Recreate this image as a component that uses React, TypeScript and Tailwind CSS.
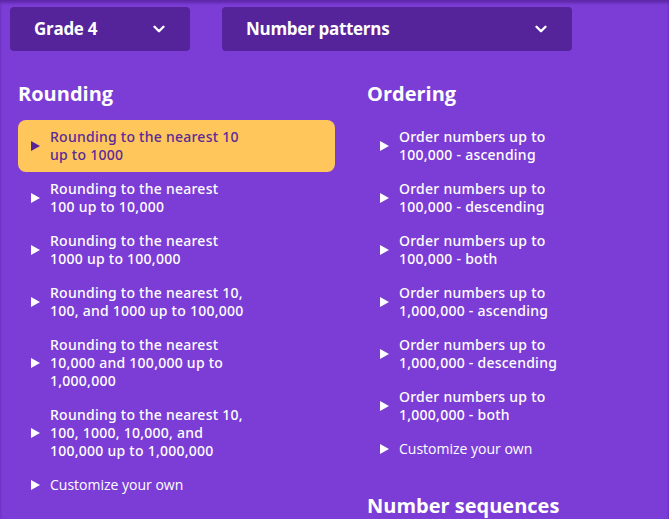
import { ChevronDown } from "lucide-react";

const rounding = [
  ["Rounding to the nearest 10", "up to 1000"],
  ["Rounding to the nearest", "100 up to 10,000"],
  ["Rounding to the nearest", "1000 up to 100,000"],
  ["Rounding to the nearest 10,", "100, and 1000 up to 100,000"],
  ["Rounding to the nearest", "10,000 and 100,000 up to", "1,000,000"],
  ["Rounding to the nearest 10,", "100, 1000, 10,000, and", "100,000 up to 1,000,000"],
];

const ordering = [
  ["Order numbers up to", "100,000 - ascending"],
  ["Order numbers up to", "100,000 - descending"],
  ["Order numbers up to", "100,000 - both"],
  ["Order numbers up to", "1,000,000 - ascending"],
  ["Order numbers up to", "1,000,000 - descending"],
  ["Order numbers up to", "1,000,000 - both"],
];

function Triangle({ dark }: { dark?: boolean }) {
  return (
    <svg width="9" height="10" viewBox="0 0 9 10" className="shrink-0">
      <path d="M0 0 L9 5 L0 10 Z" fill={dark ? "#55249a" : "#ffffff"} />
    </svg>
  );
}

function Item({ lines, active }: { lines: string[]; active?: boolean }) {
  return (
    <li
      className={`flex items-center gap-[10px] rounded-lg py-2 pl-[13px] pr-3 ${
        active ? "bg-[#ffc65c] text-[#5a2a96]" : "text-white"
      }`}
    >
      <Triangle dark={active} />
      <span className="text-[14px] leading-[18px] font-medium tracking-[0.25px] [font-family:'Noto_Sans',sans-serif]">
        {lines.map((l, i) => (
          <span key={i} className="block">
            {l}
          </span>
        ))}
      </span>
    </li>
  );
}

function Custom() {
  return (
    <li className="flex items-center gap-[10px] py-2 pl-[13px] text-white">
      <Triangle />
      <span className="text-[14px] leading-[18px] [font-family:'Open_Sans',sans-serif]">
        Customize your own
      </span>
    </li>
  );
}

function Select({ label, width }: { label: string; width: string }) {
  return (
    <button
      className={`${width} flex h-[44px] items-center justify-between rounded-[4px] bg-[#55249a] pl-6 pr-[22px] text-white`}
    >
      <span className="text-[17px] font-bold tracking-[-0.3px] [font-family:'Open_Sans',sans-serif]">
        {label}
      </span>
      <ChevronDown size={18} strokeWidth={3.2} />
    </button>
  );
}

export default function App() {
  return (
    <div className="h-[519px] overflow-hidden bg-[#7c3dd6] shadow-[inset_0_3px_3px_rgba(40,0,90,0.35)]">
      <div className="flex gap-8 px-[10px] pt-[7px]">
        <Select label="Grade 4" width="w-[180px]" />
        <Select label="Number patterns" width="w-[350px]" />
      </div>
      <div className="grid grid-cols-[317px_1fr] gap-8 px-[18px] pt-[29px]">
        <section>
          <h2 className="text-[20px] leading-[28px] font-bold text-white [font-family:'Open_Sans',sans-serif]">
            Rounding
          </h2>
          <ul className="mt-3">
            {rounding.map((l, i) => (
              <Item key={i} lines={l} active={i === 0} />
            ))}
            <Custom />
          </ul>
        </section>
        <section>
          <h2 className="text-[20px] leading-[28px] font-bold text-white [font-family:'Open_Sans',sans-serif]">
            Ordering
          </h2>
          <ul className="mt-3">
            {ordering.map((l, i) => (
              <Item key={i} lines={l} />
            ))}
            <Custom />
          </ul>
          <h2 className="mt-[26px] text-[20px] leading-[28px] font-bold text-white [font-family:'Open_Sans',sans-serif]">
            Number sequences
          </h2>
        </section>
      </div>
    </div>
  );
}
